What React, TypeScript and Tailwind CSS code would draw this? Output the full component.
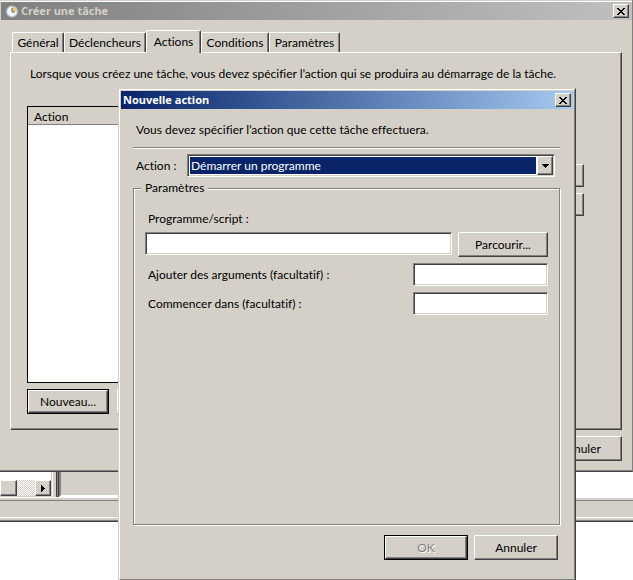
import type { ComponentProps, ReactNode } from 'react';

const raised =
  'border border-t-white border-l-white border-r-[#404040] border-b-[#404040] bg-[#d4d0c8] shadow-[inset_-1px_-1px_0_#808080]';

const sunken =
  'border border-t-[#808080] border-l-[#808080] border-r-white border-b-white bg-white shadow-[inset_1px_1px_0_#404040,inset_-1px_-1px_0_#d4d0c8]';

function Button({ className = '', children, ...props }: ComponentProps<'button'>) {
  return (
    <button type="button" className={`flex h-[25px] shrink-0 items-center justify-center ${raised} ${className}`} {...props}>
      {children}
    </button>
  );
}

function DefaultButton({ className = '', children, ...props }: ComponentProps<'button'>) {
  return (
    <button type="button" className={`flex h-[25px] shrink-0 border border-black ${className}`} {...props}>
      <span className={`flex h-full w-full items-center justify-center ${raised}`}>{children}</span>
    </button>
  );
}

function CloseButton() {
  return (
    <button type="button" aria-label="Fermer" className={`flex h-[14px] w-4 items-center justify-center ${raised}`}>
      <svg viewBox="0 0 8 7" className="h-[7px] w-2" fill="#000" shapeRendering="crispEdges">
        <path d="M0 0h2v1h1v1h2V1h1V0h2v1H7v1H6v1H5v1h1v1h1v1h1v1H6V6H5V5H3v1H2v1H0V6h1V5h1V4h1V3H2V2H1V1H0z" />
      </svg>
    </button>
  );
}

function ClockIcon() {
  return (
    <svg viewBox="0 0 14 14" className="h-3.5 w-3.5">
      <circle cx="7" cy="7.5" r="5.3" fill="#f4f7fa" stroke="#b9c6d2" strokeWidth="1.2" />
      <path d="M7 7.5V2.8a4.7 4.7 0 0 1 4.7 4.7z" fill="#f3c56b" />
      <path d="M7 4v4h3" fill="none" stroke="#5b6470" strokeWidth="1" />
    </svg>
  );
}

function Tab({ selected = false, className, children }: { selected?: boolean; className: string; children: ReactNode }) {
  return (
    <button
      type="button"
      role="tab"
      aria-selected={selected}
      className={`flex shrink-0 items-center justify-center rounded-t-[2px] border border-b-0 border-t-white border-l-white border-r-[#404040] bg-[#d4d0c8] shadow-[inset_-1px_0_0_#808080] ${
        selected ? 'relative z-10 -mb-px h-[23px]' : 'h-5'
      } ${className}`}
    >
      {children}
    </button>
  );
}

function ConsoleWindow() {
  return (
    <div className="h-[522px] border-b border-[#404040] bg-white">
      <div className="flex h-full flex-col justify-end border-b border-[#808080]">
        <div className="flex h-[25px]">
          <div className="flex w-[52px] flex-col justify-end border-r border-[#d4d0c8] bg-white">
            <div className="flex h-4 bg-[repeating-conic-gradient(#d4d0c8_0_25%,#fff_0_50%)] bg-size-[2px_2px]">
              <div className={`w-[17px] ${raised}`} />
              <button
                type="button"
                aria-label="Défiler à droite"
                className={`ml-auto flex w-4 items-center justify-center ${raised}`}
              >
                <svg viewBox="0 0 4 7" className="h-[7px] w-1" fill="#000" shapeRendering="crispEdges">
                  <path d="M0 0h1v1h1v1h1v1h1v1H3v1H2v1H1v1H0z" />
                </svg>
              </button>
            </div>
            <div className="h-px bg-[#d4d0c8]" />
          </div>
          <div className="w-1 border-l border-white bg-[#d4d0c8]" />
          <div className="flex-1 border-l border-[#404040]">
            <div className="h-full border-l border-[#808080]">
              <div className="flex h-full border-l border-[#404040]">
                <div className="w-16 border-b-2 border-l-2 border-b-white border-l-[#808080] bg-[#d4d0c8]" />
              </div>
            </div>
          </div>
        </div>
        <div className="flex h-[23px] flex-col border-t border-white bg-[#d4d0c8] pt-0.5 pb-0.5">
          <div className="flex-1 border-t border-b border-t-[#808080] border-b-white" />
        </div>
      </div>
    </div>
  );
}

function TaskWindow() {
  return (
    <section className="absolute inset-x-0 top-0 h-[472px] border-r border-b border-r-[#808080] border-b-[#404040] bg-[#d4d0c8] pt-px">
      <div className="flex h-full flex-col border-t border-b border-t-white border-b-[#808080]">
        <header className="ml-px flex h-[18px] shrink-0 items-center bg-linear-to-r from-[#808080] to-[#c0c0c0] pr-[3px] pl-1">
          <ClockIcon />
          <h1 className="ml-0.5 flex-1 font-['Noto_Sans','Open_Sans',sans-serif] text-[11px] font-bold text-[#d4d0c8]">
            Créer une tâche
          </h1>
          <CloseButton />
        </header>

        <div className="flex flex-1 flex-col pt-[10px] pr-[10px] pb-[9px] pl-[10px]">
          <div role="tablist" className="flex h-[22px] items-end pl-0.5">
            <Tab className="w-[52px]">Général</Tab>
            <Tab className="w-[82px]">Déclencheurs</Tab>
            <Tab selected className="w-[55px]">
              Actions
            </Tab>
            <Tab className="w-[68px]">Conditions</Tab>
            <Tab className="w-[71px]">Paramètres</Tab>
          </div>
          <div className={`flex flex-1 flex-col px-4 pt-[13px] pb-[15px] ${raised}`}>
            <p className="pl-[3px] whitespace-nowrap">
              Lorsque vous créez une tâche, vous devez spécifier l’action qui se produira au démarrage de la tâche.
            </p>
            <div className="mt-6 flex flex-1">
              <div className="flex-1 border border-black bg-white">
                <div className="flex h-[18px] items-center border-b border-[#808080] bg-[#d4d0c8] pt-0.5 pl-1.5">Action</div>
              </div>
              <div className="flex w-[68px] flex-col gap-[6px] pt-[58px] pr-[21px]">
                <button type="button" aria-label="Monter" className={`h-[23px] ${raised}`} />
                <button type="button" aria-label="Descendre" className={`h-[23px] ${raised}`} />
              </div>
            </div>
            <div className="mt-1.5 flex gap-2">
              <DefaultButton className="w-[82px]">Nouveau...</DefaultButton>
              <Button className="w-[82px]">Modifier...</Button>
            </div>
          </div>
          <div className="mt-1.5 flex justify-end">
            <Button className="w-[84px]">Annuler</Button>
          </div>
        </div>
      </div>
    </section>
  );
}

function ActionDialog() {
  return (
    <section
      role="dialog"
      aria-labelledby="dialog-title"
      className="absolute top-[88px] left-[118px] w-[458px] border border-t-[#d4d0c8] border-l-[#d4d0c8] border-r-[#404040] border-b-[#404040] bg-[#d4d0c8]"
    >
      <div className="border border-t-white border-l-white border-r-[#808080] border-b-[#808080] p-px">
        <header className="flex h-[18px] items-center bg-linear-to-r from-[#0a246a] to-[#a6caf0] pr-0.5 pl-0.5">
          <h2
            id="dialog-title"
            className="flex-1 font-['Noto_Sans','Open_Sans',sans-serif] text-[11px] font-bold text-white"
          >
            Nouvelle action
          </h2>
          <CloseButton />
        </header>

        <form className="pt-[13px] pr-[13px] pb-[18px] pl-3" onSubmit={(event) => event.preventDefault()}>
          <p className="pl-[3px]">Vous devez spécifier l’action que cette tâche effectuera.</p>
          <hr className="mt-[9px] h-0.5 border-t border-b border-t-[#808080] border-b-white" />

          <div className="mt-[5px] flex items-center pr-[5px] pl-[3px]">
            <label htmlFor="action" className="w-[51px]">
              Action :
            </label>
            <div className={`relative h-[23px] flex-1 p-0.5 ${sunken}`}>
              <select
                id="action"
                className="block h-full w-[346px] appearance-none bg-[#0a246a] pl-px leading-[17px] text-white outline-none"
              >
                <option>Démarrer un programme</option>
              </select>
              <span
                className={`pointer-events-none absolute top-px right-px flex h-[19px] w-4 items-center justify-center ${raised}`}
              >
                <svg viewBox="0 0 7 4" className="h-1 w-[7px]" fill="#000" shapeRendering="crispEdges">
                  <path d="M0 0h7v1H6v1H5v1H4v1H3V3H2V2H1V1H0z" />
                </svg>
              </span>
            </div>
          </div>

          <fieldset className="mt-[3px] h-[345px] border border-[#808080] px-[11px] shadow-[1px_1px_0_#fff,inset_1px_1px_0_#fff]">
            <legend className="-ml-1 bg-[#d4d0c8] px-1">Paramètres</legend>
            <label htmlFor="program" className="mt-[15px] block pl-[3px]">
              Programme/script :
            </label>
            <div className="mt-[5px] flex gap-1.5">
              <input id="program" type="text" className={`h-[23px] min-w-0 flex-1 px-1 ${sunken}`} />
              <Button className="w-[90px]">Parcourir...</Button>
            </div>
            <div className="mt-1.5 flex items-center justify-between pl-[3px]">
              <label htmlFor="arguments">Ajouter des arguments (facultatif) :</label>
              <input id="arguments" type="text" className={`h-[23px] w-[135px] px-1 ${sunken}`} />
            </div>
            <div className="mt-1.5 flex items-center justify-between pl-[3px]">
              <label htmlFor="folder">Commencer dans (facultatif) :</label>
              <input id="folder" type="text" className={`h-[23px] w-[135px] px-1 ${sunken}`} />
            </div>
          </fieldset>

          <div className="mt-2.5 flex justify-end gap-1.5 pr-0.5">
            <DefaultButton disabled className="w-[84px] text-[#808080] [text-shadow:1px_1px_0_#fff]">
              OK
            </DefaultButton>
            <Button className="w-[84px]">Annuler</Button>
          </div>
        </form>
      </div>
    </section>
  );
}

export default function App() {
  return (
    <main className="relative h-screen overflow-hidden bg-white font-['Lato','Noto_Sans',sans-serif] text-[12px] leading-4 text-black [font-variant-ligatures:none]">
      <ConsoleWindow />
      <TaskWindow />
      <ActionDialog />
    </main>
  );
}
